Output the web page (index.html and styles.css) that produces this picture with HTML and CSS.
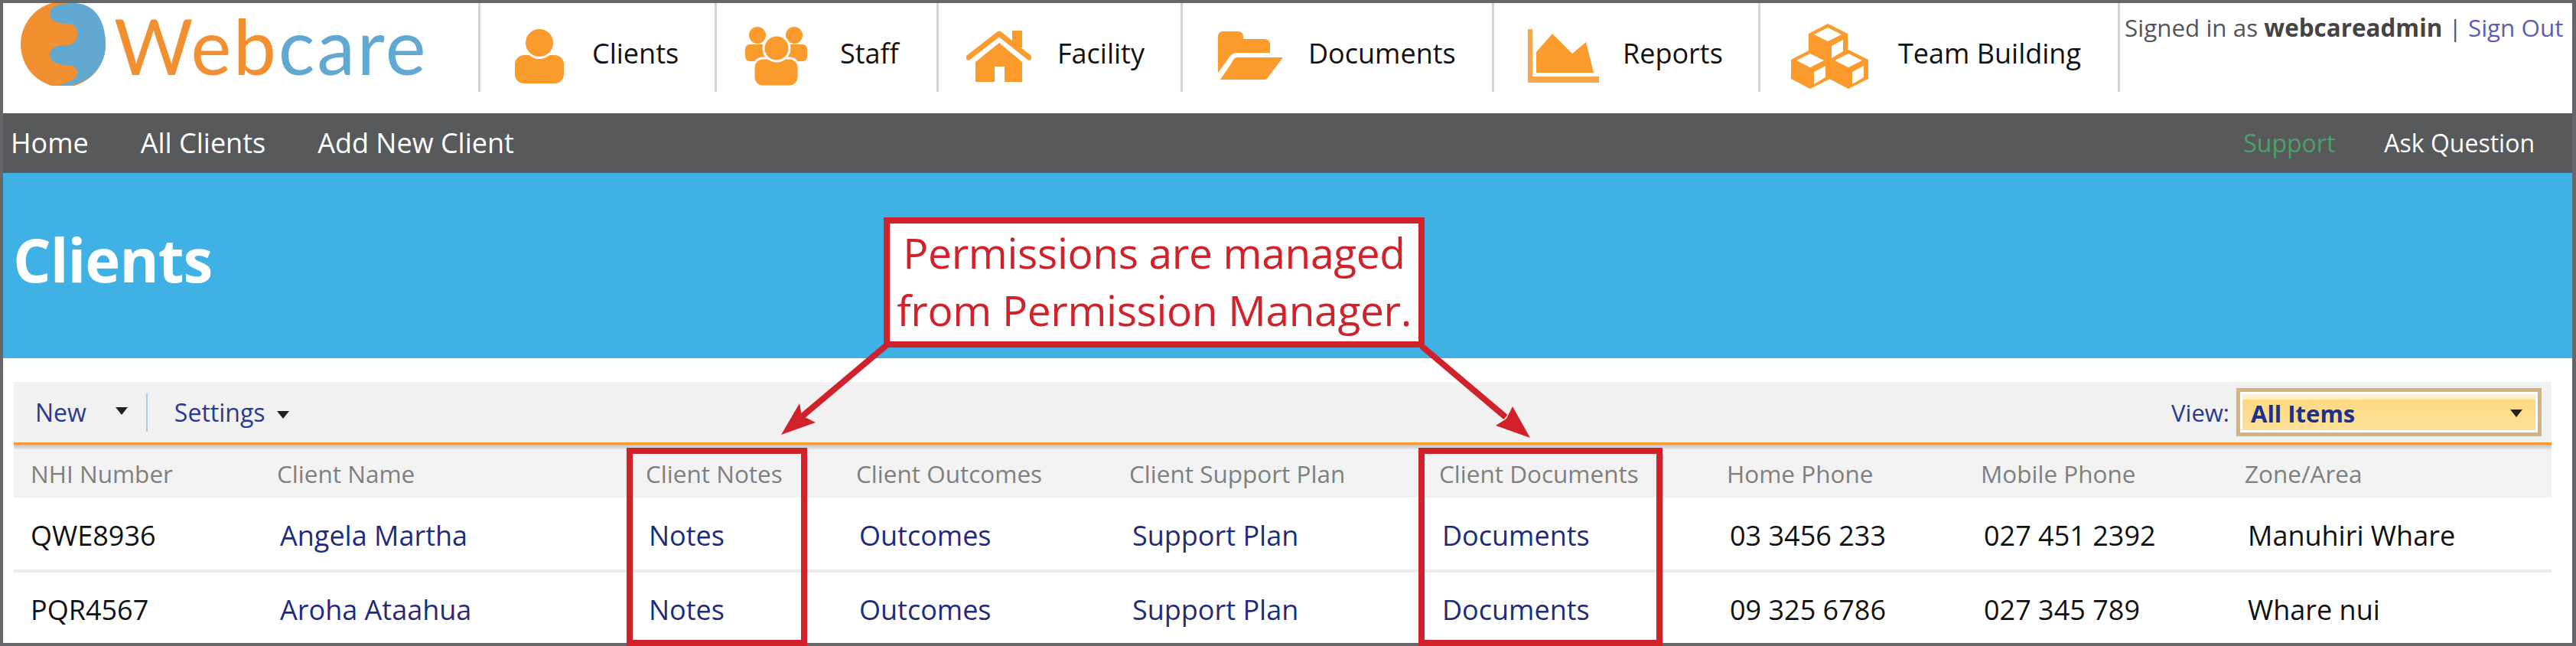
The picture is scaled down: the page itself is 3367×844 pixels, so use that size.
FILE: index.html
```html
<!DOCTYPE html>
<html lang="en">
<head>
  <meta charset="UTF-8">
  <title>Webcare - Clients</title>
  <link rel="stylesheet" href="styles.css">
</head>
<body>
<div class="frame">
  <header class="top">
    <div class="logo">
      <svg class="logo-mark" viewBox="0 0 111 108" width="111" height="108">
        <ellipse cx="55.5" cy="54" rx="55.5" ry="56" fill="#f28f30"/>
        <path d="M69 0C50 0 38 5 38 13 38 24 50 27 60 27 72 27 74 33 74 40 74 48 70 55 60 55 48 55 38 58 38 67 38 76 48 81 60 81 70 81 74 85 74 90 74 100 60 105 46 108 80 112 111 90 111 54 111 20 95 0 69 0Z" fill="#62a9d2"/>
      </svg>
      <span class="logo-text"><span class="web">Web</span><span class="care">care</span></span>
    </div>
    <nav class="main-nav">
      <a class="nav-item w-clients">
        <svg class="icon" viewBox="0 0 64 72" width="64" height="72" fill="#fb9a2d">
          <rect x="0" y="35" width="64" height="37" rx="12"/>
          <circle cx="32" cy="19" r="21" fill="#fff"/>
          <circle cx="32" cy="19" r="18"/>
        </svg>
        <span>Clients</span>
      </a>
      <a class="nav-item w-staff">
        <svg class="icon" viewBox="0 0 81 78" width="81" height="78" fill="#fb9a2d">
          <circle cx="16" cy="12" r="11"/>
          <circle cx="64" cy="12" r="11"/>
          <rect x="0" y="24" width="28" height="22" rx="6"/>
          <rect x="53" y="24" width="28" height="22" rx="6"/>
          <rect x="11" y="42" width="59" height="37" rx="12" stroke="#fff" stroke-width="3"/>
          <circle cx="41" cy="29" r="17" stroke="#fff" stroke-width="3"/>
        </svg>
        <span>Staff</span>
      </a>
      <a class="nav-item w-facility">
        <svg class="icon" viewBox="0 0 85 70" width="85" height="70" fill="#fb9a2d">
          <path d="M60 2h13v22H60Z"/>
          <path d="M3 37 43 6 82 37" fill="none" stroke="#fb9a2d" stroke-width="7" stroke-linecap="round" stroke-linejoin="round"/>
          <path d="M43 18 12 43V69H37V49H50V69H73V43Z"/>
        </svg>
        <span>Facility</span>
      </a>
      <a class="nav-item w-documents">
        <svg class="icon" viewBox="0 0 85 64" width="85" height="64" fill="#fb9a2d">
          <path d="M0 7Q0 0 7 0H26Q33 0 33 8V10H60Q68 10 68 18V28H24Q18 28 14 35L0 54Z"/>
          <path d="M25 34H85L63 63H3L18 41Q21 34 25 34Z"/>
        </svg>
        <span>Documents</span>
      </a>
      <a class="nav-item w-reports">
        <svg class="icon" viewBox="0 0 93 70" width="93" height="70" fill="#fb9a2d">
          <path d="M0 0H6V62H93V70H0Z" fill="#fca64a"/>
          <path d="M11 57V30L32 6 58 32 76 17 86 57Z"/>
        </svg>
        <span>Reports</span>
      </a>
      <a class="nav-item w-team">
        <svg class="icon" viewBox="0 0 101 85" width="101" height="85">
          <defs>
            <g id="cube">
              <path d="M25 0 51 13V38L25 51 0 38V13Z" fill="#fb9a2d"/>
              <path d="M25 5 43 14 25 23 7 14ZM30 29 45 21V36L30 45Z" fill="#fff"/>
            </g>
          </defs>
          <use href="#cube" x="23" y="0"/>
          <use href="#cube" x="0" y="34"/>
          <use href="#cube" x="50" y="34"/>
        </svg>
        <span>Team Building</span>
      </a>
    </nav>
    <div class="signed">Signed in as <b>webcareadmin</b> | <a>Sign Out</a></div>
  </header>

  <div class="sub-nav">
    <div class="sub-left"><a>Home</a><a>All Clients</a><a>Add New Client</a></div>
    <div class="sub-right"><a class="support">Support</a><a>Ask Question</a></div>
  </div>

  <div class="banner"><h1>Clients</h1></div>

  <div class="list">
    <div class="toolbar">
      <a class="tool-new">New</a><span class="arrow arrow-new"></span>
      <span class="tool-sep"></span>
      <a class="tool-settings">Settings</a><span class="arrow arrow-settings"></span>
      <span class="view-label">View:</span>
      <div class="view-select"><span>All Items</span><span class="arrow"></span></div>
    </div>
    <div class="rule"></div>
    <div class="row head">
      <div>NHI Number</div><div>Client Name</div><div>Client Notes</div><div>Client Outcomes</div><div>Client Support Plan</div><div>Client Documents</div><div>Home Phone</div><div>Mobile Phone</div><div>Zone/Area</div>
    </div>
    <div class="row item">
      <div>QWE8936</div><div><a>Angela Martha</a></div><div><a>Notes</a></div><div><a>Outcomes</a></div><div><a>Support Plan</a></div><div><a>Documents</a></div><div>03 3456 233</div><div>027 451 2392</div><div>Manuhiri Whare</div>
    </div>
    <div class="row item last">
      <div>PQR4567</div><div><a>Aroha Ataahua</a></div><div><a>Notes</a></div><div><a>Outcomes</a></div><div><a>Support Plan</a></div><div><a>Documents</a></div><div>09 325 6786</div><div>027 345 789</div><div>Whare nui</div>
    </div>
  </div>
</div>

<!-- annotation layer -->
<svg class="marks" viewBox="0 0 3367 844" width="3367" height="844">
  <rect x="823" y="589" width="228" height="251" fill="none" stroke="#d1222b" stroke-width="8"/>
  <rect x="1858" y="589" width="311" height="251" fill="none" stroke="#d1222b" stroke-width="8"/>
  <path d="M1160 450 1046 546" stroke="#d1222b" stroke-width="8" fill="none"/>
  <path d="M1021 568 1045 527 1048 543 1066 552Z" fill="#d1222b"/>
  <path d="M1858 452 1968 545" stroke="#d1222b" stroke-width="8" fill="none"/>
  <path d="M2000 572 1977 531 1969 547 1955 556Z" fill="#d1222b"/>
</svg>
<div class="callout">Permissions are managed<br>from Permission Manager.</div>
</body>
</html>
```

FILE: styles.css
```css
html, body {
  margin: 0;
  padding: 0;
  background: #fff;
}
body {
  font-family: 'Open Sans', sans-serif;
  width: 3367px;
  height: 844px;
  overflow: hidden;
  position: relative;
}
.frame {
  box-sizing: border-box;
  width: 3367px;
  height: 844px;
  border: 4px solid #66676a;
  border-right-width: 5px;
  overflow: hidden;
}

/* header */
.top {
  display: flex;
  height: 144px;
  background: #fff;
}
.logo {
  width: 621px;
  flex: none;
  display: flex;
  align-items: flex-start;
  padding-left: 23px;
  box-sizing: border-box;
  height: 120px;
}
.logo-mark {
  flex: none;
}
.logo-text {
  font-family: 'Lato', sans-serif;
  font-weight: 400;
  font-size: 100px;
  letter-spacing: 2.7px;
  line-height: 100px;
  margin: 5px 0 0 11px;
  white-space: nowrap;
}
.web { color: #f28f30; }
.care { color: #62a9d2; }

.main-nav {
  display: flex;
  height: 116px;
}
.nav-item {
  box-sizing: border-box;
  height: 116px;
  padding-top: 14px;
  border-left: 3px solid #d4d4d4;
  display: flex;
  align-items: center;
  font-size: 36px;
  color: #111;
  white-space: nowrap;
}
.nav-item .icon {
  flex: none;
  margin-top: 8px;
}
.w-clients { width: 309px; padding-left: 45px; gap: 37px; }
.w-staff { width: 290px; padding-left: 37px; gap: 43px; }
.w-facility { width: 319px; padding-left: 36px; gap: 34px; }
.w-documents { width: 407px; padding-left: 46px; gap: 33px; }
.w-reports { width: 348px; padding-left: 44px; gap: 31px; }
.w-team { width: 470px; padding-left: 40px; gap: 39px; }
.signed {
  border-left: 3px solid #d4d4d4;
  height: 116px;
  box-sizing: border-box;
  padding: 10px 0 0 6px;
  font-size: 31.4px;
  color: #555;
  white-space: nowrap;
}
.signed b { color: #444; }
.signed a { color: #5a5fb0; }

/* grey nav */
.sub-nav {
  height: 78px;
  box-sizing: border-box;
  padding-bottom: 2px;
  background: #58595b;
  display: flex;
  justify-content: space-between;
  align-items: center;
  color: #fff;
  font-size: 36px;
}
.sub-left { display: flex; gap: 68px; padding-left: 10px; }
.sub-right { display: flex; gap: 64px; padding-right: 49px; font-size: 32px; }
.support { color: #4d9e6b; }

.banner {
  height: 242px;
  box-sizing: border-box;
  padding-bottom: 16px;
  background: #3fb1e5;
  display: flex;
  align-items: center;
}
.banner h1 {
  margin: 0;
  padding-left: 13px;
  font-size: 78px;
  letter-spacing: -1px;
  font-weight: 700;
  color: #fff;
}

/* list */
.list {
  margin: 31px 27px 0 14px;
}
.toolbar {
  height: 79px;
  background: #f1f1f1;
  display: flex;
  align-items: center;
  color: #2a3a8c;
  font-size: 32px;
}
.tool-new { margin-left: 28px; }
.arrow {
  display: inline-block;
  flex: none;
  width: 0;
  height: 0;
  border-left: 8px solid transparent;
  border-right: 8px solid transparent;
  border-top: 10px solid #222;
}
.arrow-new { margin: 0 0 3px 38px; }
.arrow-settings { margin-top: 7px; }
.tool-sep {
  width: 2px;
  height: 50px;
  background: #a9cdea;
  margin: 0 35px 0 24px;
}
.tool-settings { margin-right: 15px; }
.view-label { margin-left: auto; margin-right: 9px; font-size: 31px; }
.view-select {
  box-sizing: border-box;
  width: 399px;
  height: 63px;
  border: 5px solid #d2b47c;
  padding: 2px 20px 0 14px;
  margin-right: 13px;
  background: linear-gradient(#fff6d6 0, #fff0c4 19%, #fdd983 20%, #fde29c 100%);
  box-shadow: inset 0 0 0 3px #fff;
  display: flex;
  justify-content: space-between;
  align-items: center;
  font-size: 31px;
  font-weight: 700;
  color: #1e2f8c;
}
.rule {
  height: 9px;
  border-top: 3px solid #fb9a2d;
  box-sizing: border-box;
  background: linear-gradient(#b9c2cc, #e6e8ea);
}
.row {
  display: grid;
  grid-template-columns: 322px 482px 275px 357px 405px 376px 332px 345px 1fr;
  align-items: center;
  white-space: nowrap;
}
.head {
  height: 63px;
  background: #f2f2f2;
  color: #7f7f7f;
  font-size: 31.5px;
}
.row > div { padding-left: 22px; }
.item {
  height: 89px;
  padding-top: 5px;
  border-bottom: 4px solid #ececec;
  font-size: 36px;
  color: #111;
}
.item > div + div { padding-left: 26px; }
.item.last { border-bottom: 0; height: 87px; }
.item a { color: #1f2b7b; }

/* annotations */
.marks {
  position: absolute;
  left: 0;
  top: 0;
}
.callout {
  position: absolute;
  left: 1155px;
  top: 284px;
  width: 707px;
  height: 170px;
  box-sizing: border-box;
  border: 8px solid #d1222b;
  background: #fff;
  color: #d1222b;
  font-size: 55px;
  letter-spacing: -0.3px;
  line-height: 75px;
  text-align: center;
  white-space: nowrap;
}
```
